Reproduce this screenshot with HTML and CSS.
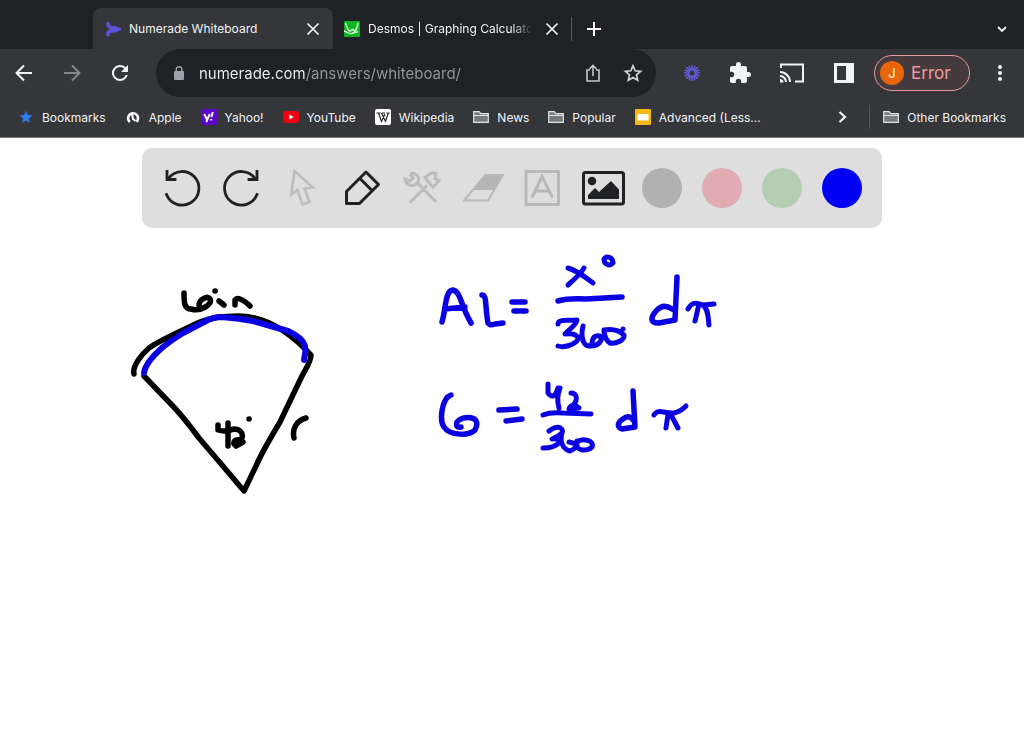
FILE: index.html
```html
<!DOCTYPE html>
<html lang="en">
<head>
<meta charset="utf-8">
<title>Numerade Whiteboard</title>
<link rel="stylesheet" href="styles.css">
</head>
<body>
<header class="browser">
  <div class="tabs">
    <div class="tab active">
      <svg class="icon16" viewBox="0 0 16 16" fill="none" stroke="#5a54d8" stroke-width="3.600" stroke-linecap="round"><path d="M3 2.500v1.500M4 5.500l3 1.500M9 6.500l4.500 1.700L8.500 10M6 9.500l-2.500 2M3 11.500v2.200"/></svg>
      <span class="tab-title">Numerade Whiteboard</span>
      <button class="plain" aria-label="Close tab"><svg class="icon16" viewBox="0 0 16 16" fill="none" stroke="#f1f3f4" stroke-width="1.700"><path d="M2.500 2.500l11 11M13.500 2.500l-11 11"/></svg></button>
    </div>
    <div class="tab second">
      <svg class="icon16" viewBox="0 0 16 16"><rect width="16" height="16" rx="1" fill="#0fb51e"/><path d="M1.500 2c1.500 5 3 8 4.500 8s2-3 4-.500 3 2 4 1M0 10c3 .500 4 3 8 2.500S13 7 14 2" fill="none" stroke="#e8ffe8" stroke-width="1.300"/></svg>
      <span class="tab-title">Desmos | Graphing Calculator</span>
      <button class="plain" aria-label="Close tab"><svg class="icon16" viewBox="0 0 16 16" fill="none" stroke="#f1f3f4" stroke-width="1.700"><path d="M2.500 2.500l11 11M13.500 2.500l-11 11"/></svg></button>
    </div>
    <span class="divider"></span>
    <button class="plain new-tab" aria-label="New tab"><svg class="icon16" viewBox="0 0 16 16" fill="none" stroke="#fff" stroke-width="2"><path d="M8 1v14M1 8h14"/></svg></button>
    <button class="plain tab-search" aria-label="Search tabs"><svg class="icon16" viewBox="0 0 16 16" fill="none" stroke="#f1f3f4" stroke-width="1.800"><path d="M4 6l4 4 4-4"/></svg></button>
  </div>

  <div class="toolbar">
    <nav class="nav">
      <button class="plain" aria-label="Back"><svg class="icon24" viewBox="0 0 24 24" fill="none" stroke="#f1f3f4" stroke-width="2"><path d="M20 12H5.500M12 4.500L4.500 12l7.500 7.500"/></svg></button>
      <button class="plain" aria-label="Forward"><svg class="icon24" viewBox="0 0 24 24" fill="none" stroke="#85878a" stroke-width="2"><path d="M4 12h14.500M12 4.500l7.500 7.500-7.500 7.500"/></svg></button>
      <button class="plain" aria-label="Reload"><svg class="icon24" viewBox="0 0 24 24" fill="#f1f3f4"><path d="M17.650 6.350A8 8 0 1 0 19.730 14h-2.080A6 6 0 1 1 12 6c1.660 0 3.140.690 4.220 1.780L13 11h7V4z"/></svg></button>
    </nav>
    <div class="omnibox">
      <svg class="icon16" viewBox="0 0 16 16"><rect x="3" y="6" width="10" height="9" rx="1" fill="#9aa0a6"/><path d="M5.200 7V4.500a2.800 2.800 0 0 1 5.600 0V7" fill="none" stroke="#9aa0a6" stroke-width="1.400"/></svg>
      <input class="url" type="text" aria-label="Address" value="numerade.com/answers/whiteboard/">
      <button class="plain" aria-label="Share"><svg class="icon20" viewBox="0 0 20 20" fill="none" stroke="#c4c6c9" stroke-width="1.600"><path d="M7 7H4v11h12V7h-3M10 13V2.500M6.500 6L10 2.500 13.500 6"/></svg></button>
      <button class="plain" aria-label="Bookmark this page"><svg class="icon20" viewBox="0 0 20 20" fill="none" stroke="#d0d2d5" stroke-width="1.700"><path d="M10 2.800l2.200 5 5.400.500-4.100 3.600 1.200 5.300-4.700-2.800-4.700 2.800 1.200-5.300-4.100-3.600 5.400-.500z"/></svg></button>
    </div>
    <div class="extensions">
      <button class="plain loom" aria-label="Loom"><svg class="icon16" viewBox="-8 -8 16 16" fill="none" stroke="#625bd8" stroke-width="1.600"><circle r="3.400"/><path d="M0-8V-3M0 8V3M-8 0h5M8 0H3M-5.700-5.700l3.500 3.500M5.700 5.700L2.200 2.200M-5.700 5.700l3.500-3.500M5.700-5.700L2.200-2.200M-3-7.300l1.800 4.500M3 7.300L1.200 2.800M3-7.300L1.200-2.800M-3 7.300l1.800-4.500M-7.300-3l4.500 1.800M7.300 3L2.800 1.200M-7.300 3l4.500-1.800M7.300-3L2.800-1.200"/></svg></button>
      <button class="plain ext" aria-label="Extensions"><svg class="icon24" viewBox="0 0 24 24" fill="#f1f3f4"><path d="M20.500 11H19V7a2 2 0 0 0-2-2h-4V3.500a2.500 2.500 0 0 0-5 0V5H4a2 2 0 0 0-2 2v3.800h1.500a2.700 2.700 0 0 1 0 5.400H2V20c0 1.100.900 2 2 2h3.800v-1.500a2.700 2.700 0 0 1 5.400 0V22H17a2 2 0 0 0 2-2v-4h1.500a2.500 2.500 0 0 0 0-5z"/></svg></button>
      <button class="plain ext" aria-label="Cast"><svg class="icon28" viewBox="0 0 28 28" fill="none" stroke="#f1f3f4" stroke-width="2"><path d="M3 9V5.500h22v17h-8M2 13a10 10 0 0 1 10 10M2 17A6 6 0 0 1 8 23"/><path d="M2 20A3.500 3.500 0 0 1 5.500 23.500H2z" fill="#f1f3f4" stroke="none"/></svg></button>
      <button class="plain ext" aria-label="Side panel"><svg class="icon24" viewBox="0 0 24 24"><path fill="#f1f3f4" fill-rule="evenodd" d="M2 2h20v20H2zM5 5v14h9V5z"/></svg></button>
      <button class="profile"><span class="avatar">J</span>Error</button>
      <button class="plain menu" aria-label="Menu"><svg class="icon20" viewBox="0 0 20 20" fill="#f1f3f4"><circle cx="10" cy="4" r="2"/><circle cx="10" cy="10" r="2"/><circle cx="10" cy="16" r="2"/></svg></button>
    </div>
  </div>

  <nav class="bookmarks">
    <a class="bookmark" href="#"><svg class="icon16" viewBox="0 0 16 16"><path fill="#2b7de9" d="M8 1.800l1.900 4.200 4.600.400-3.500 3 1 4.500L8 11.500l-4 2.400 1-4.500-3.500-3L6.100 6z"/></svg>Bookmarks</a>
    <a class="bookmark" href="#"><svg class="icon16" viewBox="0 0 16 16" fill="none"><path d="M4.800 13A5 5 0 1 1 11.500 12.800" stroke="#fff" stroke-width="2.600"/><path d="M7 5l1 5 2.500 2" stroke="#fff" stroke-width="2"/></svg>Apple</a>
    <a class="bookmark" href="#"><svg class="icon16" viewBox="0 0 16 16"><rect width="16" height="16" rx="1" fill="#5b06c9"/><path d="M3.200 5l2.800 5.500M8.800 5L5.300 13M11.800 3l-1.300 5M10.200 10v1.500" fill="none" stroke="#fff" stroke-width="1.900"/></svg>Yahoo!</a>
    <a class="bookmark" href="#"><svg class="icon16" viewBox="0 0 16 16"><rect y="2" width="16" height="12" rx="3" fill="#f00012"/><path d="M6.300 5.500v5l4.400-2.500z" fill="#fff"/></svg>YouTube</a>
    <a class="bookmark" href="#"><svg class="icon16" viewBox="0 0 16 16"><rect width="16" height="16" rx="2" fill="#fff"/><path d="M1.500 4h4M7 4h3M11.500 4h3M3.500 4l3 8.500L10 5M6.500 4l4 8.500L13.300 4" fill="none" stroke="#222" stroke-width="1.200"/></svg>Wikipedia</a>
    <a class="bookmark" href="#"><svg class="icon16" viewBox="0 0 16 16" fill="#77797c" stroke="#e3e5e8" stroke-width="1.200"><path d="M.700 13.300V2.700h5.500l1.500 2h7.600v8.600zM.700 6.500h14.600"/></svg>News</a>
    <a class="bookmark" href="#"><svg class="icon16" viewBox="0 0 16 16" fill="#77797c" stroke="#e3e5e8" stroke-width="1.200"><path d="M.700 13.300V2.700h5.500l1.500 2h7.600v8.600zM.700 6.500h14.600"/></svg>Popular</a>
    <a class="bookmark" href="#"><svg class="icon16" viewBox="0 0 16 16"><rect width="16" height="16" rx="1" fill="#f5b912"/><rect x="2.500" y="5" width="11" height="6.500" fill="#fff"/></svg>Advanced (Less...</a>
    <button class="plain more" aria-label="More bookmarks"><svg class="icon16" viewBox="0 0 16 16" fill="none" stroke="#f1f3f4" stroke-width="2.200"><path d="M5.500 3L11 8l-5.500 5"/></svg></button>
    <span class="divider"></span>
    <a class="bookmark" href="#"><svg class="icon16" viewBox="0 0 16 16" fill="#77797c" stroke="#e3e5e8" stroke-width="1.200"><path d="M.700 13.300V2.700h5.500l1.500 2h7.600v8.600zM.700 6.500h14.600"/></svg>Other Bookmarks</a>
  </nav>
</header>

<main class="whiteboard">
  <div class="tools">
    <button class="tool" aria-label="Undo"><svg class="tool-icon" viewBox="0 0 44 44" fill="none" stroke="#202124" stroke-width="2.800" stroke-linecap="square"><path d="M6.500 28.500A16.800 16.800 0 1 0 8.500 12.500M7 5.500v8h8"/></svg></button>
    <button class="tool" aria-label="Redo"><svg class="tool-icon" viewBox="0 0 44 44" fill="none" stroke="#202124" stroke-width="2.800" stroke-linecap="square"><path d="M37 28.500A16.800 16.800 0 1 1 35 12.500M37 5.500v8h-8"/></svg></button>
    <button class="tool" aria-label="Select"><svg class="tool-icon" viewBox="0 0 44 44" fill="none" stroke="#bcbcbc" stroke-width="2.500"><path d="M14.500 5l-3.500 24 6.500-5 5 14.500 7-2.500-5-13.500 8.500-1z"/></svg></button>
    <button class="tool" aria-label="Pen"><svg class="tool-icon" viewBox="0 0 44 44" fill="none" stroke="#202124" stroke-width="3" stroke-linejoin="round"><path d="M6.500 37.500V25.500L26 6l12.500 12.500-19 19zM20 12.500l12 12"/></svg></button>
    <button class="tool" aria-label="Tools"><svg class="tool-icon" viewBox="0 0 44 44" fill="none" stroke="#bcbcbc" stroke-width="3"><path d="M10 36.500l17-17M36 36L18 17.500M10 8a6 6 0 0 1 8 8A7 7 0 0 1 5 13l5 2 3-3-3-4M25 11.500l7-5 4 1-1 5 4 2-6 7z"/></svg></button>
    <button class="tool" aria-label="Eraser"><svg class="tool-icon" viewBox="0 0 44 44"><path d="M25 8h19L34 24H12z" fill="#b5b5b5"/><path d="M25.500 9H43L28 34.500H4z" fill="none" stroke="#b9b9b9" stroke-width="2" stroke-linejoin="round"/></svg></button>
    <button class="tool" aria-label="Text"><svg class="tool-icon" viewBox="0 0 44 44" fill="none" stroke="#b9b9b9" stroke-width="3"><path d="M6 5.500h32.500v33H6zM12 31.500l10-21 10.500 21M15.500 25h13"/></svg></button>
    <button class="tool" aria-label="Image"><svg class="tool-icon" viewBox="0 0 44 44"><rect x="3.500" y="6.500" width="40" height="31.500" rx="2" fill="none" stroke="#202124" stroke-width="3"/><circle cx="12" cy="15" r="4.300" fill="#202124"/><path fill="#202124" d="M8 33v-4l7-7 4 4 12-11 8 8.500V33z"/></svg></button>
    <button class="tool" aria-label="Gray ink"><span class="swatch gray"></span></button>
    <button class="tool" aria-label="Pink ink"><span class="swatch pink"></span></button>
    <button class="tool" aria-label="Green ink"><span class="swatch green"></span></button>
    <button class="tool" aria-label="Blue ink"><span class="swatch blue"></span></button>
  </div>
  <svg class="drawing" viewBox="0 228 1024 514" role="img" aria-label="Sector with a 42 degree angle, 6 inch arc and radius r; arc length equations">
    <g class="ink black">
      <path d="M134 374C132 366 142 354 149 348C160 340 183 330 200 322C212 317 224 316 238 316C266 316 290 332 311 355C311 362 305 370 302 376L280 422Q262 452 256 466L244 491L222 465L199 438Q182 415 169 402L144 376"/>
      <path d="M184 293C184 302 184 309 191 309C201 312 213 304 210 299C207 295 199 300 199 305M215 291h.1M219 301l5 4M235 305v-5C237 297 243 299 250 306"/>
      <path d="M218 425v5q6 2 13 0M228 423v23M230 430C239 427 245 433 241 440Q233 439 234 444Q239 439 243 442L236 446M249 419h.1M306 418C296 421 292 429 294 438"/>
    </g>
    <g class="ink navy">
      <path class="arc" d="M144 373C145 365 155 354 163 347Q173 339 183 333L206 321Q214 317 221 317Q237 318 253 321L288 331C303 338 307 345 305 354L304 360"/>
      <path d="M442 322C446 309 445 290 453 290C461 292 460 304 471 323M445 309l20-2M482 295C487 295 485 307 488 323Q490 326 495 324L503 323M512 302h13M514 311h12"/>
      <path class="fine" d="M568 268C578 271 585 277 593 283M584 268C582 272 576 278 568 285M604 259C604 264 609 267 613 263C613 257 606 255 604 259"/>
      <path d="M558 301Q568 298 586 299L622 297"/>
      <path class="fine" d="M558 324C558 319 567 321 577 320C577 324 570 329 565 334C576 333 580 337 577 341C573 345 564 348 558 346M583 326C580 339 584 347 591 346C598 346 604 340 600 336Q593 334 592 343M604 331Q605 340 610 343C616 344 625 340 624 335Q617 328 604 330M623 329h.1"/>
      <path d="M677 277L675 320L659 323C649 323 651 317 656 311Q663 303 672 309"/>
      <path class="fine" d="M688 309C693 300 698 304 703 305L714 304M699 304Q697 313 695 321M703 305C709 310 708 319 709 325"/>
      <path d="M451 395C442 398 439 420 444 427C450 436 469 436 475 430C483 415 462 415 457 422Q455 428 461 427M499 410l18-1M506 421l16-2"/>
      <path class="fine" d="M548 384V393Q554 401 558 388M560 388Q556 398 559 408M571 393C578 393 579 402 569 409Q572 402 579 408L571 409M543 415Q550 412 563 413L591 414M549 431C560 423 564 430 562 433Q558 437 552 439Q561 438 559 443Q554 448 543 448M562 432C560 441 562 449 570 451C578 448 576 443 573 443L569 442M577 441C574 453 589 451 592 447C595 440 582 438 577 442"/>
      <path d="M633 391L635 427L622 429C616 427 618 422 623 419Q629 414 633 420"/>
      <path class="fine" d="M654 415C658 408 665 414 674 413Q680 412 686 406M668 414L666 428M671 415L678 428"/>
    </g>
  </svg>
</main>
</body>
</html>
```

FILE: styles.css
```css
* {
  box-sizing: border-box;
}

body {
  margin: 0;
  min-height: 100vh;
  background: #fff;
  color: #f1f3f4;
  font-family: Inter, "Liberation Sans", sans-serif;
  font-size: 12px;
}

svg {
  display: block;
  flex-shrink: 0;
}

.plain {
  display: flex;
  padding: 0;
  border: 0;
  background: none;
}

.icon16 { width: 16px; height: 16px; }
.icon20 { width: 20px; height: 20px; }
.icon24 { width: 24px; height: 24px; }
.icon28 { width: 28px; height: 28px; }

.browser {
  background: #35363a;
  border-bottom: 1px solid #77787b;
}

.tabs {
  display: flex;
  align-items: center;
  height: 49px;
  padding: 8px 14px 0 93px;
  background: #202124;
}

.tab {
  display: flex;
  align-items: center;
  gap: 8px;
  height: 41px;
  padding: 0 12px;
}

.tab.active {
  width: 240px;
  background: #35363a;
  border-radius: 8px 8px 0 0;
}

.tab.second {
  width: 238px;
  padding: 0 11px;
}

.tab-title {
  flex: 1;
  overflow: hidden;
  white-space: nowrap;
}

.second .tab-title {
  margin-right: 4px;
  -webkit-mask-image: linear-gradient(to right, #000 88%, transparent);
  mask-image: linear-gradient(to right, #000 88%, transparent);
}

.divider {
  width: 1px;
  height: 24px;
  background: #55575b;
}

.tabs .divider {
  margin-right: 14px;
}

.tab-search {
  margin-left: auto;
}

.toolbar {
  display: flex;
  align-items: center;
  gap: 26px;
  height: 48px;
  padding: 0 14px 0 12px;
}

.nav {
  display: flex;
  gap: 24px;
  margin-right: -2px;
}

.omnibox {
  display: flex;
  flex: 1;
  align-items: center;
  gap: 20px;
  height: 48px;
  padding: 0 13px 0 15px;
  border-radius: 24px;
  background: #202124;
}

.url {
  flex: 1;
  min-width: 0;
  margin-left: -8px;
  padding: 0;
  border: 0;
  outline: 0;
  background: linear-gradient(to right, #f1f3f4 106px, #94979b 106px);
  -webkit-background-clip: text;
  background-clip: text;
  color: transparent;
  font: 400 15px Inter, "Liberation Sans", sans-serif;
}

.extensions {
  display: flex;
  align-items: center;
  gap: 24px;
}

.ext {
  justify-content: center;
  width: 28px;
}

.loom {
  justify-content: center;
  width: 20px;
}

.profile {
  display: flex;
  align-items: center;
  gap: 7px;
  width: 96px;
  height: 36px;
  margin-left: -8px;
  padding: 0 5px;
  border: 1px solid #e79aa0;
  border-radius: 18px;
  background: #453b3f;
  color: #ee9aa2;
  font: 400 17px Inter, "Liberation Sans", sans-serif;
}

.avatar {
  width: 24px;
  border-radius: 50%;
  background: #e8650a;
  color: #fff;
  font-size: 13px;
  line-height: 24px;
  text-align: center;
}

.menu {
  margin-left: -4px;
}

.bookmarks {
  display: flex;
  align-items: center;
  gap: 19px;
  height: 40px;
  padding: 0 18px;
}

.bookmark {
  display: flex;
  align-items: center;
  gap: 8px;
  color: inherit;
  text-decoration: none;
  white-space: nowrap;
}

.bookmarks .more {
  margin-left: auto;
}

.bookmarks .divider {
  margin-right: -6px;
}

.whiteboard {
  display: flex;
  flex-direction: column;
  align-items: center;
  padding-top: 10px;
}

.tools {
  display: flex;
  padding: 10px;
  border-radius: 10px;
  background: #dedede;
}

.tool {
  display: flex;
  align-items: center;
  justify-content: center;
  width: 60px;
  height: 60px;
  padding: 0;
  border: 0;
  background: none;
}

.tool-icon {
  width: 44px;
  height: 44px;
  overflow: visible;
}

.swatch {
  width: 40px;
  height: 40px;
  border-radius: 50%;
}

.gray { background: #b1b1b1; }
.pink { background: #e0abb1; }
.green { background: #b3ceb2; }
.blue { background: #0000f5; }

.drawing {
  width: 100%;
  max-width: 1024px;
}

.ink {
  fill: none;
  stroke-width: 5.500;
  stroke-linecap: round;
  stroke-linejoin: round;
}

.ink .fine { stroke-width: 5; }
.ink .arc { stroke-width: 6; }

.black { stroke: #000; }
.navy { stroke: #0b00e2; }
```
